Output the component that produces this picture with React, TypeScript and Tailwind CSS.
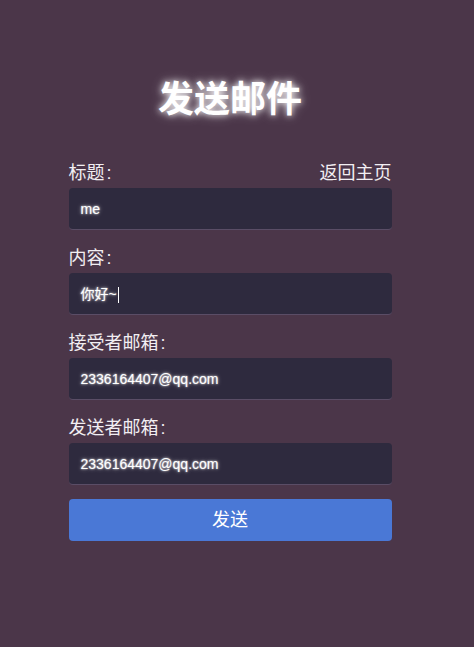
import React from "react";

const fontStack = { fontFamily: '"Liberation Sans", "Noto Sans CJK SC", sans-serif' };

function Field({ label, value, right, caret }: { label: string; value: string; right?: string; caret?: boolean }) {
  return (
    <div className="flex flex-col">
      <div className="flex h-[26px] items-start justify-between text-[18px] leading-[22px] text-[#f2eef2]">
        <span>
          {label}
          <span className="ml-[2px]">:</span>
        </span>
        {right && <a className="cursor-pointer">{right}</a>}
      </div>
      <div className="flex h-[42px] items-center rounded-[4px] border-b border-[#5a4d66] bg-[#2e2a3e] px-3 pt-[2px] text-[14px] text-white [text-shadow:0_0_2px_rgba(255,255,255,0.9),0_0_4px_rgba(255,255,255,0.5)]">
        <span>{value}</span>
        {caret && <span className="ml-[1px] inline-block h-[16px] w-[1px] bg-white" />}
      </div>
    </div>
  );
}

export default function App() {
  return (
    <div className="flex h-[647px] w-full justify-center bg-[#4b3649] pr-[14px]" style={fontStack}>
      <div className="flex w-[323px] flex-col pt-[76px]">
        <h1 className="mb-[38px] text-center text-[36px] font-bold leading-[48px] text-white [text-shadow:0_0_6px_rgba(255,255,255,0.9),0_0_12px_rgba(255,255,255,0.5)]">
          发送邮件
        </h1>
        <div className="flex flex-col gap-[17px]">
          <Field label="标题" value="me" right="返回主页" />
          <Field label="内容" value="你好~" caret />
          <Field label="接受者邮箱" value="2336164407@qq.com" />
          <Field label="发送者邮箱" value="2336164407@qq.com" />
        </div>
        <button className="mt-[14px] h-[42px] w-full rounded-[4px] bg-[#4a78d6] text-[18px] text-white">
          发送
        </button>
      </div>
    </div>
  );
}
